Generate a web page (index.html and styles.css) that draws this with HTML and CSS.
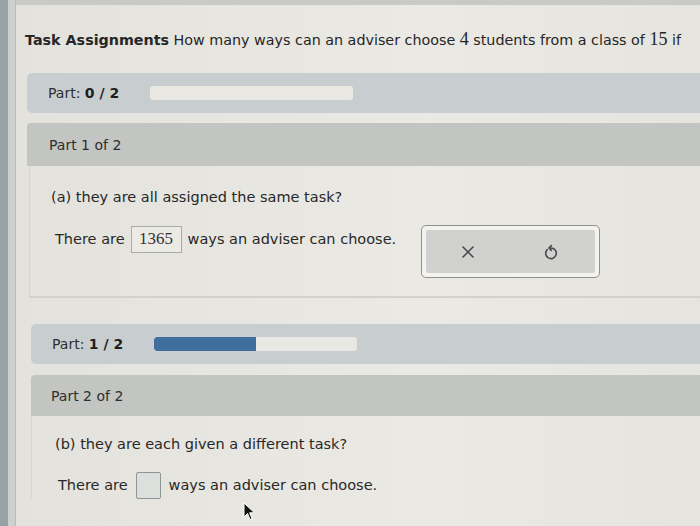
FILE: index.html
```html
<!DOCTYPE html>
<html>
<head>
<meta charset="utf-8">
<link rel="stylesheet" href="styles.css">
</head>
<body>
<div class="screen">
  <div class="edge-dark"></div>
  <div class="edge-light"></div>
  <main class="page">
    <div class="topline"></div>
    <h1 class="title"><b>Task Assignments</b> How many ways can an adviser choose <span class="math">4</span> students from a class of <span class="math">15</span> if</h1>

    <section class="part first">
      <div class="progress-bar">
        <span class="label">Part: <b>0 / 2</b></span>
        <div class="track"><div class="fill" style="width:0%"></div></div>
      </div>
      <div class="part-head">Part 1 of 2</div>
      <div class="part-body">
        <p class="q">(a) they are all assigned the same task?</p>
        <div class="answer-row">
          <p class="ans">There are <span class="box filled">1365</span> ways an adviser can choose.</p>
          <div class="actions">
            <div class="actions-inner">
              <svg class="ico" width="14" height="14" viewBox="0 0 14 14"><path d="M1.5 1.5 L12.5 12.5 M12.5 1.5 L1.5 12.5" stroke="#4a4a4a" stroke-width="1.5" fill="none"/></svg>
              <svg class="ico" width="16" height="18" viewBox="0 0 16 18"><path d="M4.2 6.6 A5.3 5.3 0 1 0 8 5 L6.2 5" stroke="#4a4a4a" stroke-width="1.6" fill="none" stroke-linecap="round"/><path d="M8.3 2.6 L6 5 L8.3 7.4" stroke="#4a4a4a" stroke-width="1.6" fill="none" stroke-linecap="round" stroke-linejoin="round"/></svg>
            </div>
          </div>
        </div>
      </div>
    </section>

    <section class="part second">
      <div class="progress-bar">
        <span class="label">Part: <b>1 / 2</b></span>
        <div class="track"><div class="fill" style="width:50%"></div></div>
      </div>
      <div class="part-head">Part 2 of 2</div>
      <div class="part-body">
        <p class="q">(b) they are each given a different task?</p>
        <p class="ans">There are <span class="box empty"></span> ways an adviser can choose.</p>
      </div>
    </section>
  </main>
  <svg class="cursor" width="14" height="20" viewBox="0 0 14 20"><path d="M1 1 L1 15 L4.5 11.5 L7 17.5 L9 16.6 L6.6 10.8 L11.5 10.8 Z" fill="#111" stroke="#fff" stroke-width="1"/></svg>
</div>
</body>
</html>
```
FILE: styles.css
```css
* { box-sizing: border-box; }
html, body { margin: 0; padding: 0; }
body {
  width: 700px;
  height: 526px;
  overflow: hidden;
  background: #e6e4de;
  font-family: "DejaVu Sans", Verdana, sans-serif;
  color: #2e2e2e;
}
.screen {
  position: relative;
  display: flex;
  height: 526px;
}
.edge-dark { width: 8px; background: #98a1a3; flex: none; }
.edge-light { width: 8px; background: #cdd0cc; border-right: 1px solid #b9bcb8; flex: none; }
.page {
  flex: 1;
  background: linear-gradient(90deg, #e4e2dc, #ebe9e3 60%, #e6e4de);
}
.topline { height: 5px; background: #c9cac6; }
.title {
  margin: 0;
  padding: 24px 0 0 9px;
  font-size: 14.3px;
  font-weight: normal;
  line-height: 20px;
  white-space: nowrap;
  color: #262626;
}
.title b { font-weight: bold; }
.math { font-family: "Liberation Serif", "DejaVu Serif", serif; font-size: 18px; }
.part { margin-left: 11px; }
.part.first { margin-top: 23px; }
.part.second { margin-top: 26px; margin-left: 15px; }
.progress-bar {
  height: 40px;
  background: #c8ced0;
  border-radius: 5px 0 0 5px;
  display: flex;
  align-items: center;
  padding-left: 21px;
  font-size: 14px;
}
.label { width: 102px; color: #2e2e2e; }
.label b { color: #1e1e1e; }
.track {
  width: 203px;
  height: 14px;
  background: #e9e8e2;
  border-radius: 3px;
  overflow: hidden;
}
.fill { height: 100%; background: #3f6d9c; border-radius: 3px 0 0 3px; }
.part-head {
  margin-top: 10px;
  height: 43px;
  background: #c2c5c1;
  border-radius: 4px 0 0 0;
  display: flex;
  align-items: center;
  padding-left: 22px;
  font-size: 14px;
  color: #2e2e2e;
}
.part.second .part-head { margin-top: 11px; height: 41px; padding-left: 20px; }
.part-body {
  padding: 21px 0 0 21px;
  border-left: 1px solid #d6d5cf;
  font-size: 14.5px;
  color: #282828;
}
.part.first .part-body {
  height: 132px;
  border-bottom: 2px solid #d2d1cb;
  margin-left: 2px;
}
.part.second .part-body { padding-left: 23px; padding-top: 18px; }
.q { margin: 0; line-height: 20px; }
.answer-row { display: flex; align-items: flex-start; margin-top: 18px; margin-left: 4px; }
.ans { margin: 0; line-height: 28px; display: flex; align-items: center; gap: 6px; }
.part.second .ans { margin-top: 17px; margin-left: 3px; gap: 8px; }
.box {
  display: inline-flex;
  align-items: center;
  justify-content: center;
  border: 1px solid #a9aba6;
  background: #eceae5;
  height: 27px;
}
.box.filled {
  width: 51px;
  font-family: "Liberation Serif", "DejaVu Serif", serif;
  font-size: 17px;
  color: #333;
}
.box.empty {
  width: 25px;
  border-color: #8d9694;
  background: #dcdfdb;
  border-radius: 2px;
}
.actions {
  margin-left: 25px;
  width: 179px;
  height: 53px;
  border: 1px solid #8f918d;
  border-radius: 5px;
  background: #f3f2ee;
  padding: 4px;
}
.actions-inner {
  height: 100%;
  background: #d1d1cf;
  border-radius: 2px;
  display: flex;
  align-items: center;
  gap: 68px;
  padding-left: 35px;
}
.ico { display: block; }
.cursor { position: absolute; left: 243px; top: 502px; }
```
